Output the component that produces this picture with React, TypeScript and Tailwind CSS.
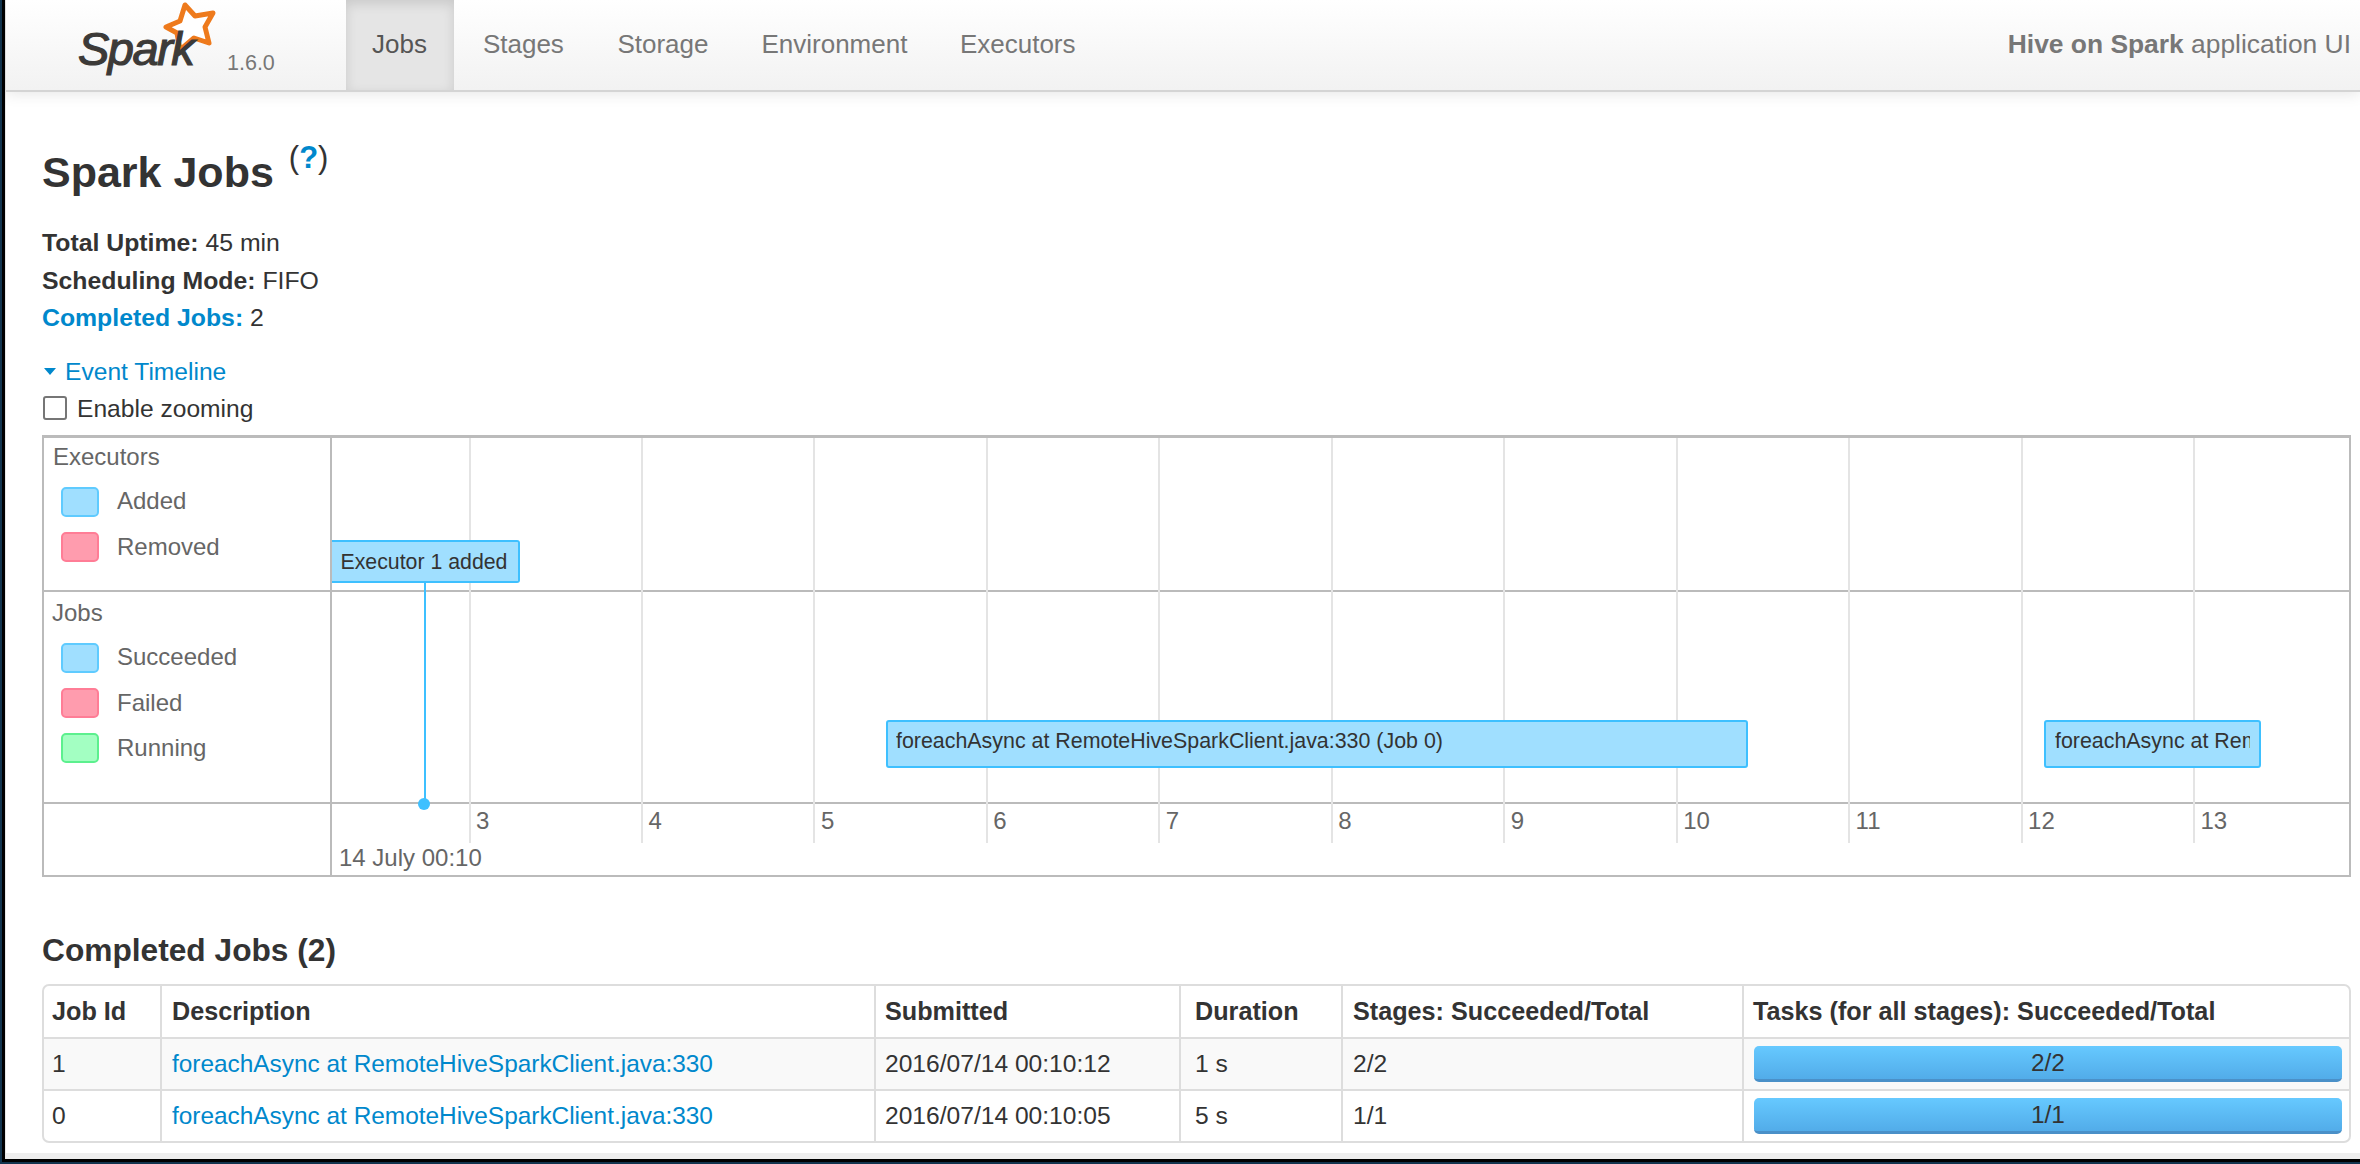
const GRID = [3, 4, 5, 6, 7, 8, 9, 10, 11, 12, 13];

function Star() {
  return (
    <svg className="absolute left-[84px] top-0" width="56" height="56" viewBox="0 0 56 56" fill="none">
      <path
        d="M23 5 L33 16 L51 13 L43 27 L47 43 L32 38 L18 50 L15 33 L4 27 L18 21 Z"
        fill="#ffffff"
        stroke="#ee7a1c"
        strokeWidth="5"
        strokeLinejoin="round"
      />
    </svg>
  );
}

function Legend({ items }: { items: { label: string; cls: string }[] }) {
  return (
    <div className="flex flex-col gap-[15px] pl-[8px]">
      {items.map((it, i) => (
        <div key={it.label} className="flex h-[30px] items-center gap-[18px]">
          <span className={`h-[30px] w-[38px] rounded-[5px] border-2 ${it.cls}`} />
          <span className={`${i === 0 ? "pb-[2px]" : "pb-0"} text-[24px] leading-[27px] text-[#666666]`}>{it.label}</span>
        </div>
      ))}
    </div>
  );
}

function Bar({ text }: { text: string }) {
  return (
    <div className="h-[36px] rounded-[5px] border-b-[3px] border-[#4a90c8] bg-linear-to-b from-[#66c9ff] to-[#52ace9] text-center text-[24.4px] leading-[33px] text-[#333333]">
      {text}
    </div>
  );
}

const th = "h-[51px] border-l-2 border-[#dddddd] pt-[2px] text-left text-[25.2px] font-bold first:border-l-0";
const td = "h-[52px] border-t-2 border-l-2 border-[#dddddd] pt-px first:border-l-0";

export default function App() {
  return (
    <div className="h-[1164px] w-[2360px] overflow-hidden bg-[#12344e] pb-[2px] pl-[2px] font-['Liberation_Sans',Arial,sans-serif] text-[24.6px] text-[#333333]">
      <div className="h-full bg-black pb-[3px] pl-[3px]">
        <div className="flex h-full flex-col border-l border-[#e8e8e8] bg-white">
          <div className="flex min-h-0 flex-1 flex-col">
            <header className="relative z-10 flex h-[92px] shrink-0 border-b-2 border-[#d4d4d4] bg-linear-to-b from-white to-[#f2f2f2] pl-[72px] shadow-[0_2px_14px_rgba(0,0,0,0.10)]">
              <div className="relative h-[90px] w-[149px]">
                <Star />
                <span className="absolute left-0 top-[21px] text-[47px] italic leading-[56px] tracking-[-1.5px] text-[#3c3a38] [-webkit-text-stroke:1.2px_#3c3a38]">
                  Spark
                </span>
              </div>
              <div className="w-[119px] pt-[50px] text-[21.5px] leading-[26px] text-[#777777]">1.6.0</div>
              <nav className="flex text-[26px] leading-[30px] text-[#777777]">
                <a className="block h-[90px] bg-[#e5e5e5] pl-[26px] pr-[27px] pt-[29px] text-[#555555] shadow-[inset_0_4px_12px_rgba(0,0,0,0.12)]">
                  Jobs
                </a>
                <a className="ml-[2px] block px-[27px] pt-[29px]">Stages</a>
                <a className="block px-[26.5px] pt-[29px]">Storage</a>
                <a className="block px-[26.5px] pt-[29px]">Environment</a>
                <a className="block px-[26px] pt-[29px]">Executors</a>
              </nav>
              <div className="ml-auto pr-[9px] pt-[29px] text-[26.4px] leading-[30px] text-[#777777]">
                <b>Hive on Spark</b> application UI
              </div>
            </header>

            <main className="pl-[36px] pr-[9px]">
              <h3 className="mt-[55px] text-[43px] font-bold leading-[50px]">
                Spark Jobs
                <sup className="ml-[15px] align-[4px] text-[31px] font-normal leading-[0]">
                  (<a className="font-bold text-[#0088cc]">?</a>)
                </sup>
              </h3>

              <ul className="mt-[27px] text-[24.8px] leading-[37.5px]">
                <li>
                  <b>Total Uptime:</b> 45 min
                </li>
                <li>
                  <b>Scheduling Mode:</b> FIFO
                </li>
                <li>
                  <a className="font-bold text-[#0088cc]">Completed Jobs:</a> 2
                </li>
              </ul>

              <div className="mt-[16px] flex h-[37px] items-center leading-[37px] text-[#0088cc]">
                <svg width="12" height="7" viewBox="0 0 12 7" className="ml-[2px] mr-[9px]">
                  <path d="M0 0H12L6 7Z" fill="#0088cc" />
                </svg>
                Event Timeline
              </div>
              <label className="flex h-[37px] items-center leading-[37px]">
                <span className="ml-px mr-[10px] h-[24px] w-[24px] rounded-[3px] border-2 border-[#767676] bg-white" />
                Enable zooming
              </label>

              <div className="mt-[8px] flex h-[442px] border-x-2 border-b-2 border-t-[3px] border-[#bbbbbb] text-[24px] leading-[30px] text-[#666666]">
                <div className="w-[288px] shrink-0 border-r-2 border-[#bbbbbb]">
                  <div className="h-[154px] border-b-2 border-[#bbbbbb] pl-[9px] pt-[4px]">
                    <div>Executors</div>
                    <div className="mt-[15px]">
                      <Legend
                        items={[
                          { label: "Added", cls: "border-[#5fcbff] bg-[#a0dfff]" },
                          { label: "Removed", cls: "border-[#ff7d96] bg-[#ff9cae]" },
                        ]}
                      />
                    </div>
                  </div>
                  <div className="h-[212px] border-b-2 border-[#bbbbbb] pl-[8px] pt-[6px]">
                    <div>Jobs</div>
                    <div className="mt-[15px] pl-px">
                      <Legend
                        items={[
                          { label: "Succeeded", cls: "border-[#5fcbff] bg-[#a0dfff]" },
                          { label: "Failed", cls: "border-[#ff7d96] bg-[#ff9cae]" },
                          { label: "Running", cls: "border-[#5cf08e] bg-[#a3ffc2]" },
                        ]}
                      />
                    </div>
                  </div>
                </div>

                <div className="relative min-w-0 flex-1 overflow-hidden">
                  <div className="h-[154px] border-b-2 border-[#bbbbbb]" />
                  <div className="h-[212px] border-b-2 border-[#bbbbbb]" />

                  {GRID.map((n, i) => (
                    <div key={n}>
                      <div
                        className="absolute top-0 h-[405px] w-[2px] bg-[#e4e4e4]"
                        style={{ left: 136.5 + i * 172.45 }}
                      />
                      <div className="absolute top-[368px]" style={{ left: 144 + i * 172.45 }}>
                        {n}
                      </div>
                    </div>
                  ))}
                  <div className="absolute left-[7px] top-[405px]">14 July 00:10</div>

                  <div className="absolute left-[92px] top-[145px] h-[221px] w-[2px] bg-[#3ec0ff]" />
                  <div className="absolute left-[86px] top-[360px] h-[12px] w-[12px] rounded-full bg-[#3ec0ff]" />

                  <div className="absolute left-0 top-[102px] flex h-[43px] w-[188px] items-center rounded-r-[3px] border-2 border-l-0 border-[#3ec0ff] bg-[#a0dfff] pl-[8.5px] pt-[2px] text-[21.3px] text-[#333333]">
                    Executor 1 added
                  </div>
                  <div className="absolute left-[554px] top-[282px] h-[48px] w-[862px] rounded-[3px] border-2 border-[#3ec0ff] bg-[#a0dfff] px-[8px] pt-[4px] text-[21.4px] text-[#333333]">
                    <div className="overflow-hidden whitespace-nowrap">
                      foreachAsync at RemoteHiveSparkClient.java:330 (Job 0)
                    </div>
                  </div>
                  <div className="absolute left-[1712px] top-[282px] h-[48px] w-[217px] rounded-[3px] border-2 border-[#3ec0ff] bg-[#a0dfff] px-[9px] pt-[4px] text-[21.4px] text-[#333333]">
                    <div className="overflow-hidden whitespace-nowrap">
                      foreachAsync at RemoteHiveSparkClient.java:330 (Job 1)
                    </div>
                  </div>
                </div>
              </div>

              <h4 className="mt-[53px] text-[31.7px] font-bold leading-[40px]">Completed Jobs (2)</h4>

              <div className="mt-[14px] overflow-hidden rounded-[7px] border-2 border-[#dddddd]">
                <table className="w-full table-fixed border-separate border-spacing-0">
                  <colgroup>
                    <col className="w-[116px]" />
                    <col className="w-[714px]" />
                    <col className="w-[305px]" />
                    <col className="w-[162px]" />
                    <col className="w-[401px]" />
                    <col />
                  </colgroup>
                  <thead>
                    <tr>
                      <th className={`${th} pl-[8px]`}>Job Id</th>
                      <th className={`${th} pl-[10px]`}>Description</th>
                      <th className={`${th} pl-[9px]`}>Submitted</th>
                      <th className={`${th} pl-[14px]`}>Duration</th>
                      <th className={`${th} pl-[10px]`}>Stages: Succeeded/Total</th>
                      <th className={`${th} pl-[9px]`}>Tasks (for all stages): Succeeded/Total</th>
                    </tr>
                  </thead>
                  <tbody>
                    <tr className="bg-[#f9f9f9]">
                      <td className={`${td} pl-[8px]`}>1</td>
                      <td className={`${td} pl-[10px] text-[24.4px] text-[#0088cc]`}>foreachAsync at RemoteHiveSparkClient.java:330</td>
                      <td className={`${td} pl-[9px]`}>2016/07/14 00:10:12</td>
                      <td className={`${td} pl-[14px]`}>1 s</td>
                      <td className={`${td} pl-[10px]`}>2/2</td>
                      <td className={`${td} pl-[10px] pr-[7px]`}>
                        <Bar text="2/2" />
                      </td>
                    </tr>
                    <tr>
                      <td className={`${td} h-[51px] pl-[8px]`}>0</td>
                      <td className={`${td} h-[51px] pl-[10px] text-[24.4px] text-[#0088cc]`}>foreachAsync at RemoteHiveSparkClient.java:330</td>
                      <td className={`${td} h-[51px] pl-[9px]`}>2016/07/14 00:10:05</td>
                      <td className={`${td} h-[51px] pl-[14px]`}>5 s</td>
                      <td className={`${td} h-[51px] pl-[10px]`}>1/1</td>
                      <td className={`${td} h-[51px] pl-[10px] pr-[7px]`}>
                        <Bar text="1/1" />
                      </td>
                    </tr>
                  </tbody>
                </table>
              </div>
            </main>
          </div>
          <div className="h-[6px] shrink-0 bg-[#eeeeee]" />
        </div>
      </div>
    </div>
  );
}
